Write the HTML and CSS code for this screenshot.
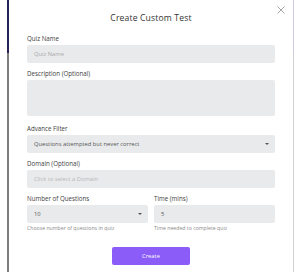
FILE: index.html
```html
<!DOCTYPE html>
<html>
<head>
<meta charset="utf-8">
<link rel="stylesheet" href="styles.css">
</head>
<body>
<div class="page">
  <div class="edge-left"></div>
  <div class="modal">
    <button class="close" aria-label="Close">
      <svg width="8" height="8" viewBox="0 0 8 8"><path d="M0.5 0.5L7.5 7.5M7.5 0.5L0.5 7.5" stroke="#9a9a9a" stroke-width="0.9" fill="none"/></svg>
    </button>
    <h1 class="title">Create Custom Test</h1>
    <div class="field">
      <label class="label">Quiz Name</label>
      <div class="input placeholder">Quiz Name</div>
    </div>
    <div class="field field-wide">
      <label class="label">Description (Optional)</label>
      <div class="input textarea"></div>
    </div>
    <div class="field">
      <label class="label">Advance Filter</label>
      <div class="input select"><span>Questions attempted but never correct</span><i class="caret"></i></div>
    </div>
    <div class="field">
      <label class="label">Domain (Optional)</label>
      <div class="input placeholder light">Click to select a Domain</div>
    </div>
    <div class="row">
      <div class="col">
        <label class="label">Number of Questions</label>
        <div class="input select"><span>10</span><i class="caret"></i></div>
        <div class="help">Choose number of questions in quiz</div>
      </div>
      <div class="col">
        <label class="label">Time (mins)</label>
        <div class="input"><span>5</span></div>
        <div class="help">Time needed to complete quiz</div>
      </div>
    </div>
    <div class="actions">
      <button class="btn">Create</button>
    </div>
  </div>
  <div class="edge-right"></div>
</div>
</body>
</html>
```
FILE: styles.css
```css
* { box-sizing: border-box; }
html, body { margin: 0; padding: 0; background: #fff; }
body {
  font-family: "Open Sans", "Liberation Sans", sans-serif;
  width: 300px;
  height: 278px;
  overflow: hidden;
}
.page {
  display: flex;
  height: 272px;
  padding-left: 7px;
}
.edge-left {
  width: 2px;
  background: linear-gradient(to bottom, #262358 0, #262358 53px, #7d7d7d 53px, #7d7d7d 100%);
}
.edge-right {
  width: 1px;
  background: linear-gradient(to bottom, #cfcbe0 0, #cfcbe0 53px, #d2d2d2 53px, #d2d2d2 100%);
}
.modal {
  position: relative;
  width: 284px;
  padding: 12px 18px 0 18px;
  background: #fff;
}
.close {
  position: absolute;
  top: 5.5px;
  left: 267.5px;
  width: 8px;
  height: 8px;
  padding: 0;
  border: 0;
  background: none;
  line-height: 0;
}
.title {
  margin: 0 0 11px 0;
  font-size: 8.6px;
  line-height: 12px;
  font-weight: 500;
  color: #333;
  text-align: center;
  letter-spacing: 0.15px;
}
.field { margin-bottom: 7px; }
.field-wide { margin-bottom: 9px; }
.label {
  display: block;
  font-size: 6.2px;
  line-height: 8px;
  color: #404040;
  margin-bottom: 2px;
}
.input {
  display: flex;
  align-items: center;
  height: 18px;
  padding: 0 7px;
  background: #e9eaec;
  border-radius: 2px;
  font-size: 5.8px;
  color: #555;
}
.placeholder { color: #a8a8a8; }
.light { color: #b8b8b8; }
.textarea { height: 36px; }
.select { justify-content: space-between; }
.caret {
  width: 0;
  height: 0;
  border-left: 2px solid transparent;
  border-right: 2px solid transparent;
  border-top: 2.5px solid #555;
  margin-right: -1px;
}
.row {
  display: flex;
  gap: 6px;
}
.col { flex: 1; }
.help {
  font-size: 5.2px;
  line-height: 8px;
  color: #8a8a8a;
  margin-top: 1px;
}
.actions {
  display: flex;
  justify-content: center;
  margin-top: 15px;
}
.btn {
  width: 78px;
  height: 18px;
  border: 0;
  border-radius: 2px;
  background: #8b5cf8;
  color: #fff;
  font-family: "Open Sans", "Liberation Sans", sans-serif;
  font-size: 5.8px;
  padding: 0;
}
```
